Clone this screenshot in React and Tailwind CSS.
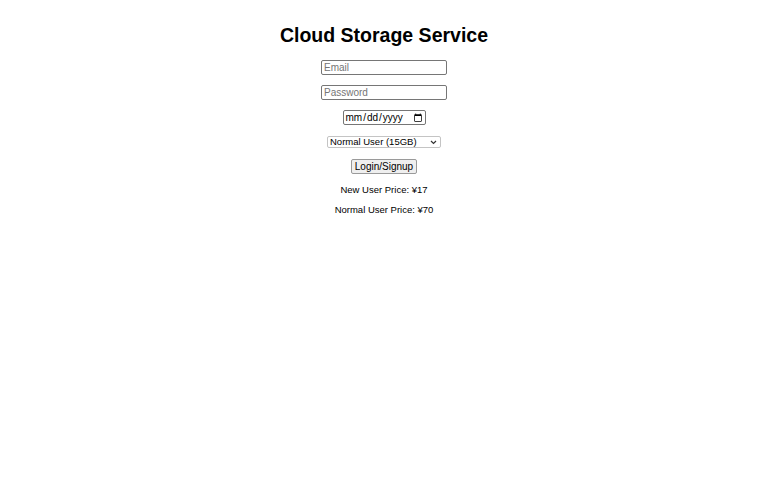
export default function App() {
    return (
        <div className="min-h-screen bg-white font-['Liberation_Sans',Arial,sans-serif] text-black">
            <div className="flex flex-col items-center pt-[23px]">
                <h1 className="text-[19.5px] font-bold leading-[24px]">Cloud Storage Service</h1>

                <input type="email" placeholder="Email"
                    className="mt-[13px] w-[126px] h-[15px] border border-[#767676] rounded-[2px] px-[2px] text-[10px] leading-none placeholder:text-[#757575]" />

                <input type="password" placeholder="Password"
                    className="mt-[10px] w-[126px] h-[15px] border border-[#767676] rounded-[2px] px-[2px] text-[10px] leading-none placeholder:text-[#757575]" />

                <input type="date"
                    className="mt-[10px] w-[83px] h-[15px] border border-[#767676] rounded-[2px] pl-[1px] text-[10px] leading-none" />

                {/* select with small chevron */}
                <div className="mt-[11px] w-[114px] h-[12px] flex items-center border border-[#c4c4c4] rounded-[2px]">
                    <select defaultValue="normal"
                        className="flex-1 min-w-0 h-full appearance-none pl-[2px] text-[9.5px] leading-none outline-none">
                        <option value="new">New User (5GB)</option>
                        <option value="normal">Normal User (15GB)</option>
                    </select>
                    <svg width="7" height="5" viewBox="0 0 7 5" className="mr-[3px] shrink-0">
                        <path d="M1 1 L3.5 3.5 L6 1" fill="none" stroke="#333" strokeWidth="1.2" />
                    </svg>
                </div>

                <button className="mt-[11px] w-[66px] h-[15px] border border-[#9a9a9a] rounded-[2px] bg-[#efefef] text-[10px] leading-none">
                    Login/Signup
                </button>

                <p className="mt-[10px] text-[9.5px] leading-[12px]">New User Price: ¥17</p>
                <p className="mt-[8px] text-[9.5px] leading-[12px]">Normal User Price: ¥70</p>
            </div>
        </div>
    );
}
